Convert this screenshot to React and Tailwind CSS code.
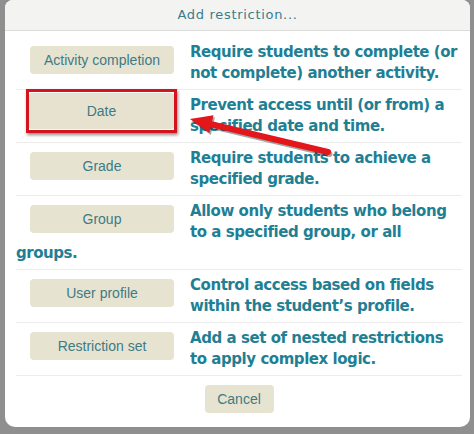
import React from "react";

const rows = [
  { label: "Activity completion", text: "Require students to complete (or not complete) another activity." },
  { label: "Date", text: "Prevent access until (or from) a specified date and time.", marked: true },
  { label: "Grade", text: "Require students to achieve a specified grade." },
  { label: "Group", text: "Allow only students who belong to a specified group, or all groups." },
  { label: "User profile", text: "Control access based on fields within the student\u2019s profile." },
  { label: "Restriction set", text: "Add a set of nested restrictions to apply complex logic." },
];

const btnFont = { fontFamily: '"Liberation Sans", Arial, sans-serif' };
const descFont = { fontFamily: '"DejaVu Sans", Verdana, sans-serif' };

function RestrictionRow({ label, text, marked }) {
  return (
    <div className="flow-root border-b border-[#ececec] pt-[5px] pb-[5px]">
      {marked ? (
        <div className="relative float-left -mt-[2px] ml-[13px] mr-[16px]">
          <button
            className="w-[145px] h-[36px] rounded-[3px] bg-[#e6e2cf] text-[14px] text-[#3d7b86]"
            style={btnFont}
          >
            {label}
          </button>
          {/* annotation frame */}
          <span className="absolute -left-[3px] -right-[3px] -top-[4px] -bottom-[4px] border-[3px] border-[#d3141c] shadow-[1px_2px_3px_rgba(0,0,0,0.45)]" />
        </div>
      ) : (
        <button
          className="float-left mt-[4px] ml-[14px] mr-[16px] w-[144px] h-[28px] rounded-[4px] bg-[#e7e3d1] text-[14px] text-[#3d7b86]"
          style={btnFont}
        >
          {label}
        </button>
      )}
      <p
        className="text-[15px] leading-[21px] font-bold tracking-[-0.45px] text-[#1f7f94]"
        style={descFont}
      >
        {text}
      </p>
    </div>
  );
}

export default function App() {
  return (
    <div className="relative w-[474px] h-[434px] bg-[#8f8f8f] overflow-hidden">
      <div className="ml-[5px] w-[465px] h-[427px] bg-white rounded-t-[8px] rounded-b-[10px] overflow-hidden flex flex-col">
        {/* Header */}
        <div
          className="h-[31px] shrink-0 flex items-center justify-center bg-[#f3f3f2] border-b border-[#dcdcdc] text-[13px] tracking-[0.7px] text-[#3a7d89]"
          style={descFont}
        >
          Add restriction...
        </div>

        {/* Options */}
        <div className="pl-[11px] pr-[8px] pt-[6px]">
          {rows.map((r) => (
            <RestrictionRow key={r.label} {...r} />
          ))}
          <div className="flex justify-center pt-[9px]">
            <button
              className="w-[69px] h-[28px] rounded-[4px] bg-[#e7e3d1] text-[14px] text-[#3d7b86]"
              style={btnFont}
            >
              Cancel
            </button>
          </div>
        </div>
      </div>

      {/* red arrow annotation */}
      <svg
        className="absolute left-0 top-0 pointer-events-none"
        width="474"
        height="434"
        viewBox="0 0 474 434"
      >
        <g transform="translate(1.5 2)" opacity="0.35">
          <line x1="328" y1="152" x2="206" y2="123" stroke="#000" strokeWidth="6" strokeLinecap="round" />
          <polygon points="190,119 213.5,115.3 209.3,132.9" fill="#000" />
        </g>
        <line x1="328" y1="152" x2="206" y2="123" stroke="#e3161c" strokeWidth="6" strokeLinecap="round" />
        <polygon points="190,119 213.5,115.3 209.3,132.9" fill="#e3161c" />
      </svg>
    </div>
  );
}
